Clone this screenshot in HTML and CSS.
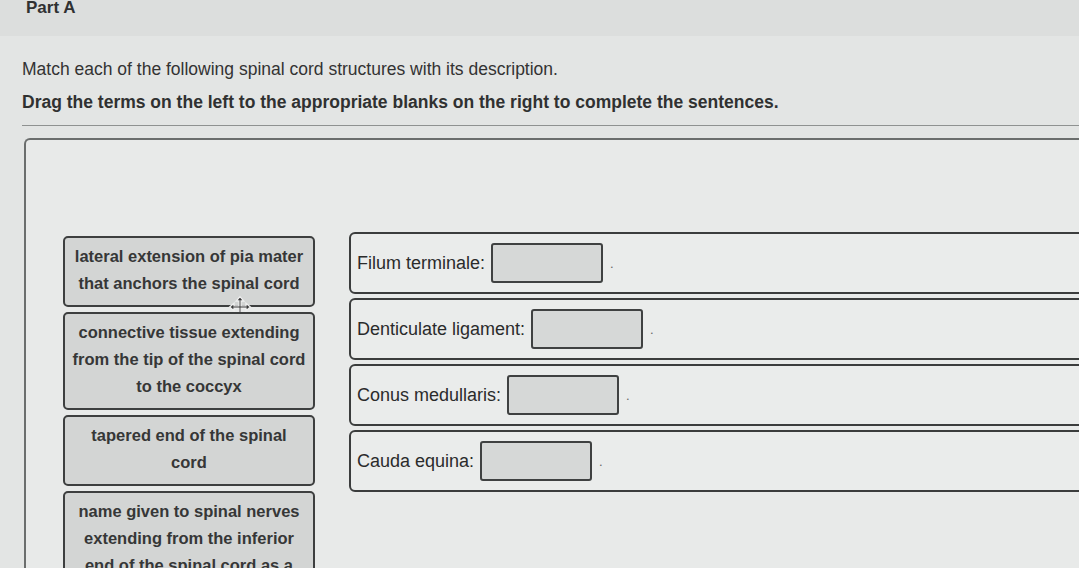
FILE: index.html
```html
<!DOCTYPE html>
<html>
  <head>
    <meta charset="UTF-8" />
    <title>Part A</title>
    <link rel="stylesheet" href="styles.css">
  </head>
  <body>
    <div class="part-bar">Part A</div>
    <div class="prompt">
      <p class="lead">Match each of the following spinal cord structures with its description.</p>
      <p class="instr">Drag the terms on the left to the appropriate blanks on the right to complete the sentences.</p>
    </div>
    <div class="rule"></div>
    <div class="board">
      <div class="terms">
        <div class="tile">lateral extension of pia mater<br>that anchors the spinal cord
          <svg class="move-cursor" width="24" height="24" viewBox="0 0 22 22">
            <path d="M11 1.5 L7.5 5.5 H10 V10 H5.5 V7.5 L1.5 11 L5.5 14.5 V12 H10 V16.5 H7.5 L11 20.5 L14.5 16.5 H12 V12 H16.5 V14.5 L20.5 11 L16.5 7.5 V10 H12 V5.5 H14.5 Z" fill="#3a3a3a" stroke="#eeeeee" stroke-width="1.2"/>
          </svg>
        </div>
        <div class="tile">connective tissue extending<br>from the tip of the spinal cord<br>to the coccyx</div>
        <div class="tile">tapered end of the spinal<br>cord</div>
        <div class="tile">name given to spinal nerves<br>extending from the inferior<br>end of the spinal cord as a</div>
      </div>
      <div class="sentences">
        <div class="row">Filum terminale:<span class="blank"></span><span class="dot">.</span></div>
        <div class="row">Denticulate ligament:<span class="blank"></span><span class="dot">.</span></div>
        <div class="row">Conus medullaris:<span class="blank"></span><span class="dot">.</span></div>
        <div class="row">Cauda equina:<span class="blank"></span><span class="dot">.</span></div>
      </div>
    </div>
  </body>
</html>
```

FILE: styles.css
```css
html, body {
   margin: 0;
   padding: 0;
   height: 100%;
   overflow: hidden;
}
body {
   font-family: "Liberation Sans", Arial, sans-serif;
   color: #2c2d2d;
   background-color: #e3e5e4;
}
p {
   margin: 0;
}

.part-bar {
   height: 36px;
   padding-left: 26px;
   font-size: 17px;
   font-weight: bold;
   line-height: 15px;
   color: #303132;
   background-color: #dcdedd;
}

.prompt {
   padding: 22px 0 0 22px;
   font-size: 17.5px;
}
.lead {
   line-height: 22px;
   color: #333;
}
.instr {
   margin-top: 11px;
   font-weight: bold;
   line-height: 22px;
   color: #303131;
}

.rule {
   margin: 12px 0 0 22px;
   border-top: 1px solid #8f9291;
}

/* drag and drop area */
.board {
   display: flex;
   gap: 34px;
   margin: 12px 0 0 24px;
   padding: 96px 0 0 37px;
   height: 600px;
   border-top: 2px solid #6b6e6d;
   border-left: 2px solid #6b6e6d;
   border-top-left-radius: 6px;
   background-color: #e8eae9;
}

.terms {
   display: flex;
   flex-direction: column;
   gap: 5px;
   width: 252px;
   flex: none;
}
.tile {
   position: relative;
   padding: 5px 2px 8px 2px;
   border: 2px solid #3d3f3f;
   border-radius: 5px;
   background-color: #d3d5d4;
   font-size: 16.5px;
   font-weight: bold;
   line-height: 27px;
   text-align: center;
   color: #363737;
}
.move-cursor {
   position: absolute;
   left: 163px;
   bottom: -14px;
}

.sentences {
   display: flex;
   flex-direction: column;
   gap: 4px;
   margin-top: -4px;
   flex: 1;
}
.row {
   display: flex;
   align-items: center;
   height: 58px;
   width: 900px;
   padding-left: 6px;
   border: 2px solid #3b3d3d;
   border-radius: 6px;
   background-color: #eaeceb;
   font-size: 18px;
   color: #2a2b2b;
}
.blank {
   width: 108px;
   height: 36px;
   margin-left: 6px;
   border: 2px solid #3f4141;
   border-radius: 3px;
   background-color: #d6d8d7;
}
.dot {
   margin-left: 7px;
   font-size: 13px;
   color: #666;
}
```
